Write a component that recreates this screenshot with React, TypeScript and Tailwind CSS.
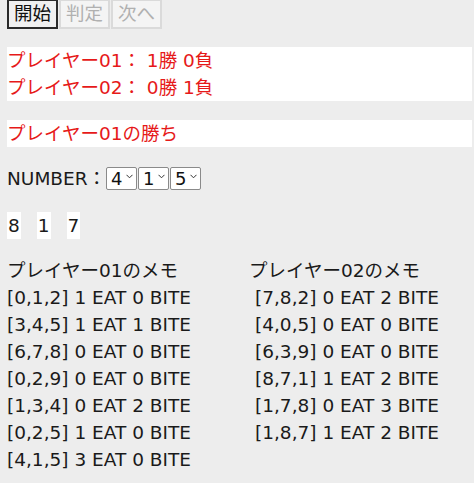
import { useState } from 'react'

const memo1 = [
  '[0,1,2] 1 EAT 0 BITE',
  '[3,4,5] 1 EAT 1 BITE',
  '[6,7,8] 0 EAT 0 BITE',
  '[0,2,9] 0 EAT 0 BITE',
  '[1,3,4] 0 EAT 2 BITE',
  '[0,2,5] 1 EAT 0 BITE',
  '[4,1,5] 3 EAT 0 BITE',
]

const memo2 = [
  '[7,8,2] 0 EAT 2 BITE',
  '[4,0,5] 0 EAT 0 BITE',
  '[6,3,9] 0 EAT 0 BITE',
  '[8,7,1] 1 EAT 2 BITE',
  '[1,7,8] 0 EAT 3 BITE',
  '[1,8,7] 1 EAT 2 BITE',
]

function NumberSelect({ value, onChange }: { value: string; onChange: (v: string) => void }) {
  return (
    <div className="relative">
      <select
        value={value}
        onChange={(e) => onChange(e.target.value)}
        className="appearance-none w-[31px] h-[23px] pl-[4px] bg-white border border-[#8a8a8a] rounded-[2px] text-[18px] leading-[21px] text-[#111] outline-none"
      >
        {['0', '1', '2', '3', '4', '5', '6', '7', '8', '9'].map((n) => (
          <option key={n} value={n}>
            {n}
          </option>
        ))}
      </select>
      <svg
        className="absolute right-[4px] top-[9px] pointer-events-none"
        width="7"
        height="5"
        viewBox="0 0 7 5"
        fill="none"
      >
        <path d="M0.5 0.8 L3.5 3.8 L6.5 0.8" stroke="#333" strokeWidth="1" />
      </svg>
    </div>
  )
}

export default function App() {
  const [nums, setNums] = useState(['4', '1', '5'])

  const setNum = (i: number, v: string) => {
    setNums((prev) => prev.map((n, j) => (j === i ? v : n)))
  }

  return (
    <div
      className="min-h-screen bg-[#ededed] pl-[7px] pr-[2px] text-[18.5px] leading-[27px] text-[#1a1a1a]"
      style={{ fontFamily: '"DejaVu Sans", "Noto Sans CJK JP", sans-serif' }}
    >
      {/* Buttons */}
      <div className="flex gap-[1px] -mt-[1px]">
        <button className="h-[30px] px-[5px] border-2 border-[#2a2a2a] bg-[#f0f0f0] text-[18.5px] leading-none text-[#111]">
          開始
        </button>
        <button
          disabled
          className="h-[30px] px-[5px] border-2 border-[#dadada] bg-[#f4f4f4] text-[18.5px] leading-none text-[#b0b0b0]"
        >
          判定
        </button>
        <button
          disabled
          className="h-[30px] px-[5px] border-2 border-[#dadada] bg-[#f4f4f4] text-[18.5px] leading-none text-[#b0b0b0]"
        >
          次へ
        </button>
      </div>

      {/* Score */}
      <div className="mt-[18px] bg-white text-[#e61919]">
        <div>プレイヤー01： 1勝 0負</div>
        <div>プレイヤー02： 0勝 1負</div>
      </div>

      {/* Result */}
      <div className="mt-[19px] bg-white text-[#e61919]">プレイヤー01の勝ち</div>

      {/* Number input */}
      <div className="mt-[18px] flex items-center h-[27px]">
        <span>NUMBER：</span>
        <div className="flex gap-[1px]">
          {nums.map((n, i) => (
            <NumberSelect key={i} value={n} onChange={(v) => setNum(i, v)} />
          ))}
        </div>
      </div>

      {/* Answer digits */}
      <div className="mt-[20px] flex gap-[16px]">
        <span className="bg-white px-[1px]">8</span>
        <span className="bg-white px-[1px]">1</span>
        <span className="bg-white px-[1px]">7</span>
      </div>

      {/* Memos */}
      <div className="mt-[18px] flex pb-[10px]">
        <div className="w-[242px]">
          <div>プレイヤー01のメモ</div>
          {memo1.map((m) => (
            <div key={m}>{m}</div>
          ))}
        </div>
        <div>
          <div>プレイヤー02のメモ</div>
          {memo2.map((m) => (
            <div key={m} className="pl-[6px]">
              {m}
            </div>
          ))}
        </div>
      </div>
    </div>
  )
}
